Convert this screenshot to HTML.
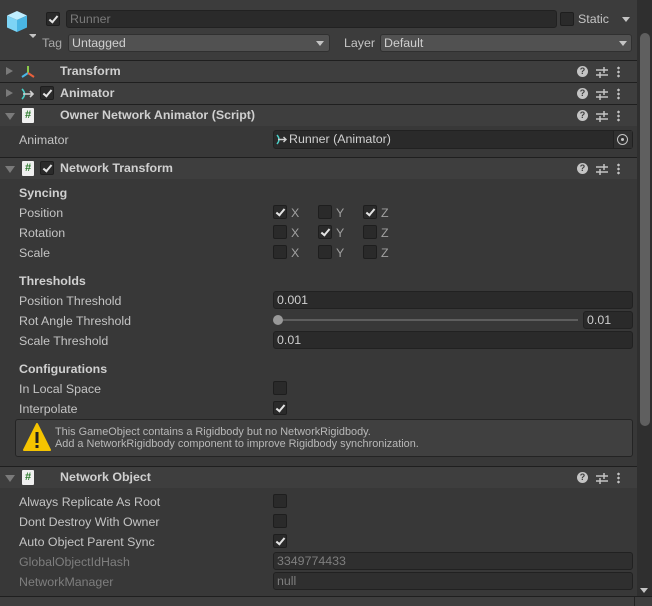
<!DOCTYPE html>
<html><head><meta charset="utf-8"><style>
*{box-sizing:border-box;margin:0;padding:0}
body{width:652px;height:606px;background:#383838;position:relative;overflow:hidden;font-family:"Liberation Sans",sans-serif;font-size:12.4px;color:#c4c4c4}
.a{position:absolute}
.hdr{position:absolute;left:0;width:637px;height:22px;background:#3e3e3e;border-top:1px solid #1f1f1f}
.hdr .t{position:absolute;left:60px;top:3px;font-weight:bold;color:#d0d0d0;font-size:12.4px}
.tri{position:absolute;left:6px;top:6px;width:0;height:0}
.tr{border-top:4px solid transparent;border-bottom:4px solid transparent;border-left:7px solid #7a7a7a;top:6px}
.td{border-left:5px solid transparent;border-right:5px solid transparent;border-top:7px solid #7a7a7a;top:8px;left:5px}
.cb{position:absolute;width:14px;height:14px;background:#2a2a2a;border:1px solid #1e1e1e;border-radius:2px}
.cb.c::after{content:"";position:absolute;left:4px;top:1px;width:3px;height:7px;border:solid #e4e4e4;border-width:0 2px 2px 0;transform:rotate(40deg)}
.lbl{position:absolute;left:19px}
.bold{font-weight:bold;color:#d0d0d0}
.fld{position:absolute;height:18px;background:#2a2a2a;border:1px solid #212121;border-radius:3px;padding:1px 3px;color:#d0d0d0}
.icons{position:absolute;right:10px;top:4px;width:50px;height:14px}
.q{position:absolute;left:0;top:1px;width:11px;height:11px;border-radius:50%;background:#c4c4c4;color:#3e3e3e;font-size:9px;font-weight:bold;text-align:center;line-height:11px}
.dots{position:absolute;left:40px;top:1px;width:3px;height:12px;background:radial-gradient(circle,#c4c4c4 1.2px,transparent 1.4px) 0 0/3px 4px}
.sl{position:absolute;left:19px;top:0}
.hash{position:absolute;left:22px;top:3px;width:12px;height:15px;background:#f0f0f0;border-radius:1px;color:#2a7a2a;font-size:11px;font-weight:bold;text-align:center;line-height:15px}
.xyz{position:absolute;color:#a0a0a0}
.dim{color:#7e7e7e}
</style></head><body>
<!-- top -->
<div class="a" style="left:0;top:0;width:637px;height:61px;background:#3c3c3c"></div>
<svg class="a" style="left:6px;top:9px" width="30" height="30" viewBox="0 0 30 30">
<polygon points="11,2 21,6.5 11,11 1,6.5" fill="#bfeeff"/>
<polygon points="1,6.5 11,11 11,23 1,18.5" fill="#7dd4f5"/>
<polygon points="21,6.5 11,11 11,23 21,18.5" fill="#4ab6e4"/>
<polygon points="23,25 31,25 27,29" fill="#c4c4c4"/>
</svg>
<div class="cb c" style="left:46px;top:12px"></div>
<div class="fld" style="left:66px;top:10px;width:491px;height:18px;color:#7a7a7a">Runner</div>
<div class="cb" style="left:560px;top:12px"></div>
<div class="a" style="left:578px;top:12px;color:#c4c4c4">Static</div>
<div class="a" style="left:622px;top:17px;border-left:4px solid transparent;border-right:4px solid transparent;border-top:5px solid #c4c4c4"></div>
<div class="a" style="left:42px;top:36px;color:#a8a8a8">Tag</div>
<div class="fld" style="left:68px;top:34px;width:262px;background:#515151;border-color:#303030">Untagged</div>
<div class="a" style="left:316px;top:41px;border-left:4px solid transparent;border-right:4px solid transparent;border-top:5px solid #c4c4c4"></div>
<div class="a" style="left:344px;top:36px;color:#c4c4c4">Layer</div>
<div class="fld" style="left:380px;top:34px;width:252px;background:#515151;border-color:#303030">Default</div>
<div class="a" style="left:619px;top:41px;border-left:4px solid transparent;border-right:4px solid transparent;border-top:5px solid #c4c4c4"></div>

<!-- Transform -->
<div class="hdr" style="top:60px"><div class="tri tr"></div>
<svg class="a" style="left:21px;top:4px" width="14" height="14"><line x1="7" y1="1" x2="7" y2="8" stroke="#8ac84a" stroke-width="2"/><line x1="7" y1="8" x2="1" y2="12" stroke="#49b6e6" stroke-width="2"/><line x1="7" y1="8" x2="13" y2="12" stroke="#e9603c" stroke-width="2"/></svg>
<div class="t">Transform</div><div class="icons"><div class="q">?</div><svg class="sl" width="12" height="14"><path d="M0 5H12M0 10H12M8 2V8M4 7V13" stroke="#c4c4c4" stroke-width="1.5"/></svg><div class="dots"></div></div></div>
<!-- Animator -->
<div class="hdr" style="top:82px"><div class="tri tr"></div>
<svg class="a" style="left:21px;top:4px" width="14" height="14"><path d="M1 2 Q6 7 1 12" stroke="#49d0c8" stroke-width="1.6" fill="none"/><path d="M2 7 H12 M9 4 L12 7 L9 10" stroke="#d0d0d0" stroke-width="1.6" fill="none"/></svg>
<div class="cb c" style="left:40px;top:3px"></div>
<div class="t">Animator</div><div class="icons"><div class="q">?</div><svg class="sl" width="12" height="14"><path d="M0 5H12M0 10H12M8 2V8M4 7V13" stroke="#c4c4c4" stroke-width="1.5"/></svg><div class="dots"></div></div></div>
<!-- Owner -->
<div class="hdr" style="top:104px"><div class="tri td"></div><div class="hash">#</div>
<div class="t">Owner Network Animator (Script)</div><div class="icons"><div class="q">?</div><svg class="sl" width="12" height="14"><path d="M0 5H12M0 10H12M8 2V8M4 7V13" stroke="#c4c4c4" stroke-width="1.5"/></svg><div class="dots"></div></div></div>
<div class="lbl" style="top:133px">Animator</div>
<div class="fld" style="left:273px;top:130px;width:360px;height:19px;padding-left:15px">Runner (Animator)</div>
<svg class="a" style="left:276px;top:134px" width="12" height="11"><path d="M1 1 Q5 5.5 1 10" stroke="#49d0c8" stroke-width="1.4" fill="none"/><path d="M2 5.5H10M7.5 3L10 5.5L7.5 8" stroke="#d0d0d0" stroke-width="1.4" fill="none"/></svg>
<div class="a" style="left:613px;top:131px;width:19px;height:17px;border-left:1px solid #212121;background:#303030"></div>
<div class="a" style="left:617px;top:134px;width:11px;height:11px;border:1.5px solid #c4c4c4;border-radius:50%"></div>
<div class="a" style="left:621px;top:138px;width:3px;height:3px;background:#c4c4c4;border-radius:50%"></div>

<!-- Network Transform -->
<div class="hdr" style="top:157px"><div class="tri td"></div><div class="hash">#</div>
<div class="cb c" style="left:40px;top:3px"></div>
<div class="t">Network Transform</div><div class="icons"><div class="q">?</div><svg class="sl" width="12" height="14"><path d="M0 5H12M0 10H12M8 2V8M4 7V13" stroke="#c4c4c4" stroke-width="1.5"/></svg><div class="dots"></div></div></div>
<div class="lbl bold" style="top:186px">Syncing</div>
<div class="lbl" style="top:206px">Position</div>
<div class="lbl" style="top:226px">Rotation</div>
<div class="lbl" style="top:246px">Scale</div>
<div class="cb c" style="left:273px;top:205px"></div><div class="xyz" style="left:291px;top:206px">X</div>
<div class="cb" style="left:318px;top:205px"></div><div class="xyz" style="left:336px;top:206px">Y</div>
<div class="cb c" style="left:363px;top:205px"></div><div class="xyz" style="left:381px;top:206px">Z</div>
<div class="cb" style="left:273px;top:225px"></div><div class="xyz" style="left:291px;top:226px">X</div>
<div class="cb c" style="left:318px;top:225px"></div><div class="xyz" style="left:336px;top:226px">Y</div>
<div class="cb" style="left:363px;top:225px"></div><div class="xyz" style="left:381px;top:226px">Z</div>
<div class="cb" style="left:273px;top:245px"></div><div class="xyz" style="left:291px;top:246px">X</div>
<div class="cb" style="left:318px;top:245px"></div><div class="xyz" style="left:336px;top:246px">Y</div>
<div class="cb" style="left:363px;top:245px"></div><div class="xyz" style="left:381px;top:246px">Z</div>
<div class="lbl bold" style="top:274px">Thresholds</div>
<div class="lbl" style="top:294px">Position Threshold</div>
<div class="lbl" style="top:314px">Rot Angle Threshold</div>
<div class="lbl" style="top:334px">Scale Threshold</div>
<div class="fld" style="left:273px;top:291px;width:360px">0.001</div>
<div class="a" style="left:278px;top:319px;width:300px;height:2px;background:#5e5e5e"></div>
<div class="a" style="left:273px;top:315px;width:10px;height:10px;border-radius:50%;background:#999"></div>
<div class="fld" style="left:583px;top:311px;width:50px">0.01</div>
<div class="fld" style="left:273px;top:331px;width:360px">0.01</div>
<div class="lbl bold" style="top:362px">Configurations</div>
<div class="lbl" style="top:382px">In Local Space</div>
<div class="lbl" style="top:402px">Interpolate</div>
<div class="cb" style="left:273px;top:381px"></div>
<div class="cb c" style="left:273px;top:401px"></div>
<div class="a" style="left:15px;top:419px;width:618px;height:38px;background:#404040;border:1px solid #242424;border-radius:3px"></div>
<svg class="a" style="left:23px;top:422px" width="28" height="30" viewBox="0 0 28 30"><polygon points="14,2 27,28 1,28" fill="#f5c400" stroke="#f5c400" stroke-linejoin="round" stroke-width="2"/><rect x="12.5" y="10" width="3" height="11" fill="#222"/><rect x="12.5" y="23" width="3" height="3" fill="#222"/></svg>
<div class="a" style="left:55px;top:426px;font-size:10.9px;color:#b8b8b8;line-height:12px">This GameObject contains a Rigidbody but no NetworkRigidbody.<br>Add a NetworkRigidbody component to improve Rigidbody synchronization.</div>

<!-- Network Object -->
<div class="hdr" style="top:466px"><div class="tri td"></div><div class="hash">#</div>
<div class="t">Network Object</div><div class="icons"><div class="q">?</div><svg class="sl" width="12" height="14"><path d="M0 5H12M0 10H12M8 2V8M4 7V13" stroke="#c4c4c4" stroke-width="1.5"/></svg><div class="dots"></div></div></div>
<div class="lbl" style="top:495px">Always Replicate As Root</div>
<div class="lbl" style="top:515px">Dont Destroy With Owner</div>
<div class="lbl" style="top:535px">Auto Object Parent Sync</div>
<div class="lbl dim" style="top:555px">GlobalObjectIdHash</div>
<div class="lbl dim" style="top:575px">NetworkManager</div>
<div class="cb" style="left:273px;top:494px"></div>
<div class="cb" style="left:273px;top:514px"></div>
<div class="cb c" style="left:273px;top:534px"></div>
<div class="fld" style="left:273px;top:552px;width:360px;color:#7e7e7e;background:#2f2f2f">3349774433</div>
<div class="fld" style="left:273px;top:572px;width:360px;color:#7e7e7e;background:#2f2f2f">null</div>
<div class="a" style="left:0;top:596px;width:652px;height:10px;background:#3e3e3e;border-top:1px solid #1f1f1f"></div>
<div class="a" style="left:634px;top:597px;width:1px;height:9px;background:#222"></div>

<!-- scrollbar -->
<div class="a" style="left:637px;top:0;width:15px;height:596px;background:#2f2f2f"></div>
<div class="a" style="left:640px;top:33px;width:10px;height:393px;background:#5f5f5f;border-radius:5px"></div>
<div class="a" style="left:640px;top:588px;border-left:4px solid transparent;border-right:4px solid transparent;border-top:5px solid #c4c4c4"></div>
</body></html>
